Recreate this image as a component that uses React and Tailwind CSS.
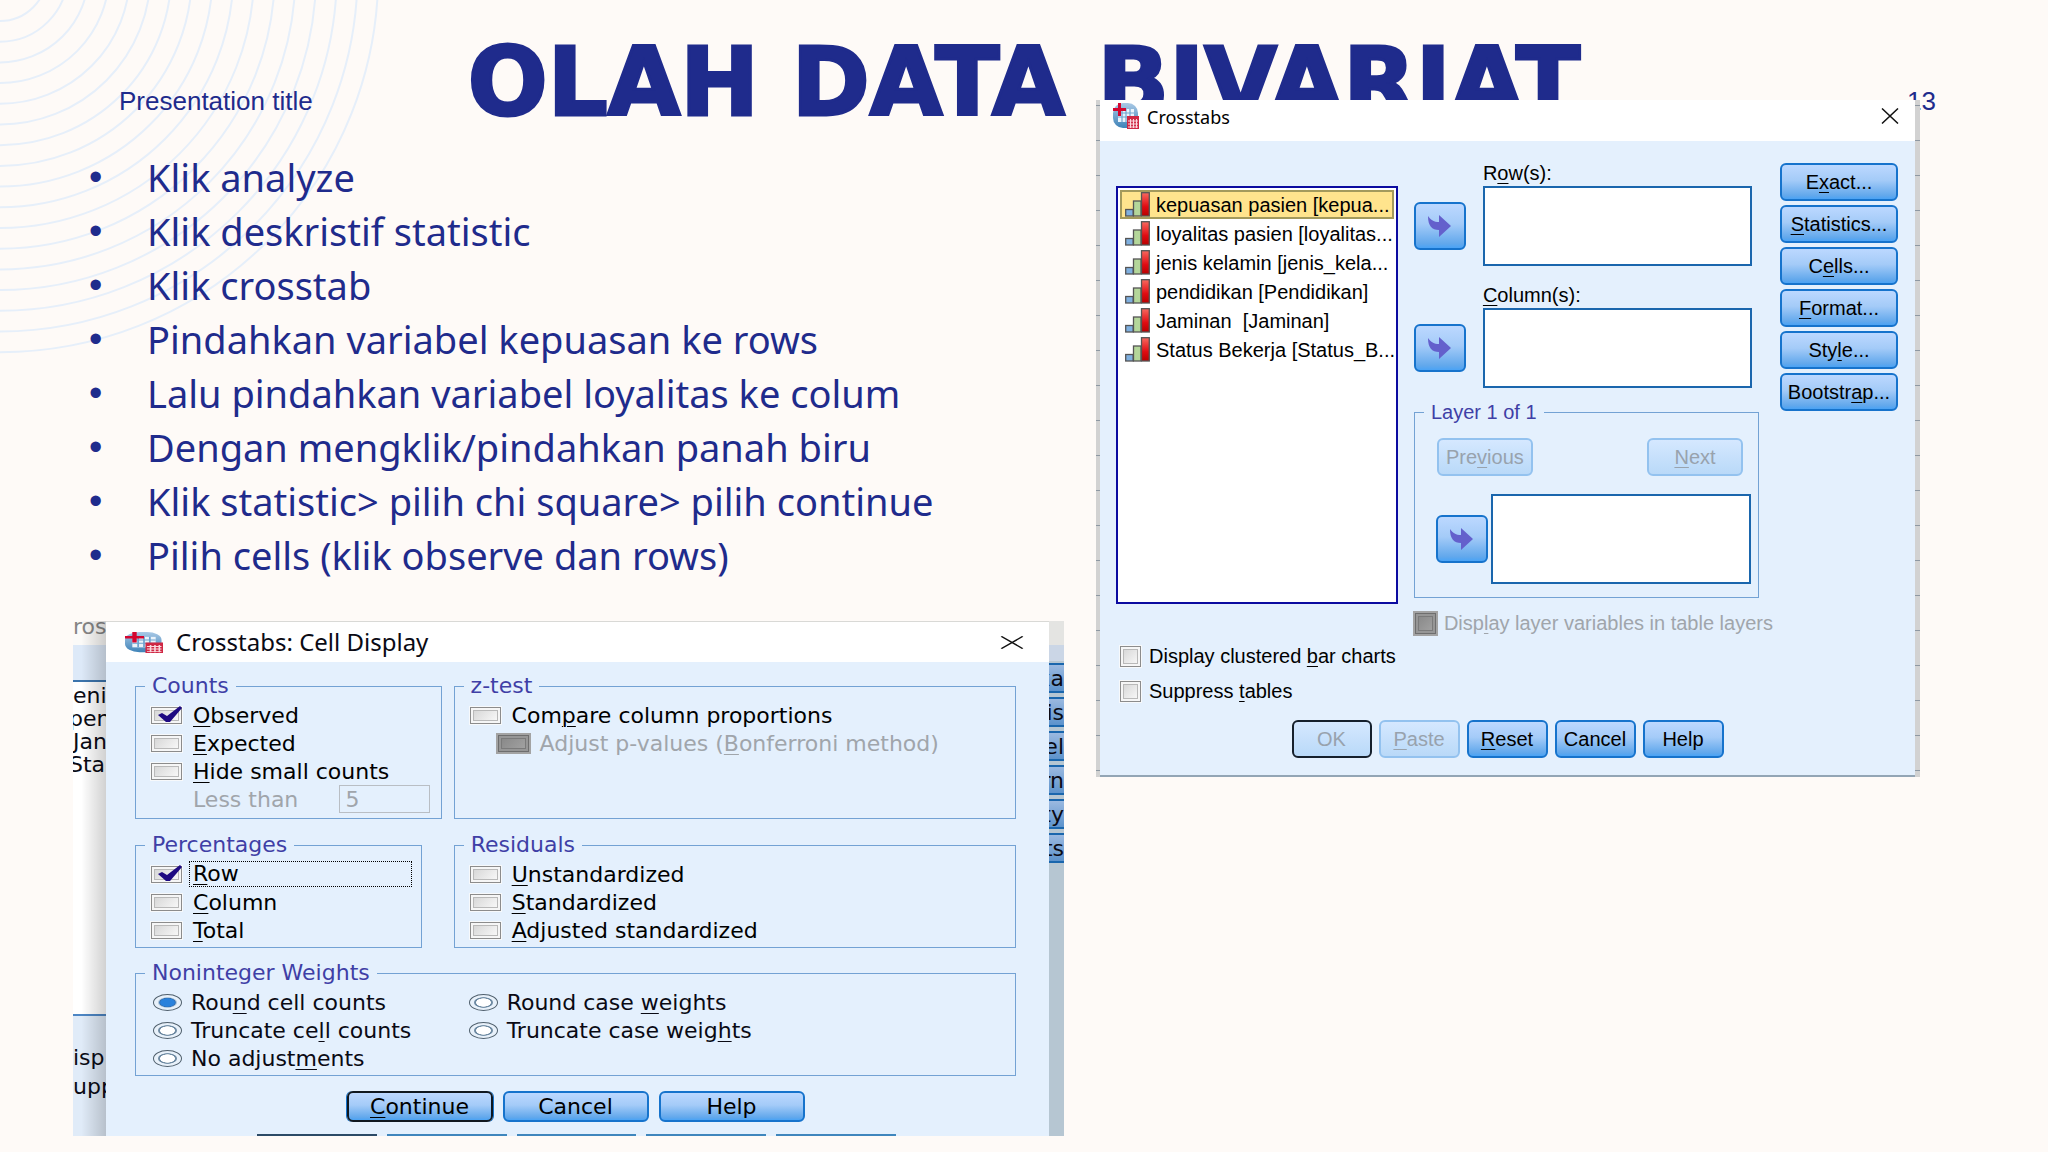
const steps = [
  'Klik analyze',
  'Klik deskristif statistic',
  'Klik crosstab',
  'Pindahkan variabel kepuasan ke rows',
  'Lalu pindahkan variabel loyalitas ke colum',
  'Dengan mengklik/pindahkan panah biru',
  'Klik statistic> pilih chi square> pilih continue',
  'Pilih cells (klik observe dan rows)',
];

const variables = [
  'kepuasan pasien [kepua...',
  'loyalitas pasien [loyalitas...',
  'jenis kelamin [jenis_kela...',
  'pendidikan [Pendidikan]',
  'Jaminan  [Jaminan]',
  'Status Bekerja [Status_B...',
];

const sideButtons = ['E&xact...', '&Statistics...', 'C&ells...', '&Format...', 'Sty&le...', 'Bootstr&ap...'];

const rings = Array.from({ length: 17 }, (_, i) => 47 + i * 20.7);

// "&" marks the letter that is underlined, as in Windows menus
function Mnemonic({ text }) {
  const at = text.indexOf('&');
  if (at < 0) return text;
  return (
    <span>
      {text.slice(0, at)}
      <span className="underline decoration-1 underline-offset-3">{text[at + 1]}</span>
      {text.slice(at + 2)}
    </span>
  );
}

function AppIcon({ className }) {
  return (
    <svg viewBox="0 0 26 26" preserveAspectRatio="none" className={className} aria-hidden="true">
      <defs>
        <linearGradient id="globe" x1="0" y1="0" x2="0" y2="1">
          <stop offset="0" stopColor="#a9c9e6" />
          <stop offset="1" stopColor="#3f83b8" />
        </linearGradient>
      </defs>
      <rect x="0" y="0" width="25" height="25" rx="10" fill="url(#globe)" />
      <rect x="5" y="6" width="16" height="13" fill="#eaf3fb" />
      <path d="M5 10h16M5 14h16M9 6v13M13 6v13M17 6v13" stroke="#6ea3d0" strokeWidth="1.2" />
      <path d="M5 0h3v5h5v3H8v5H5V8H0V5h5z" fill="#d4062f" />
      <rect x="14" y="13" width="12" height="13" fill="#cf2744" />
      <path d="M15 18h10M15 21h10M15 24h10M17.5 16v9M20.5 16v9M23.5 16v9" stroke="#fbd9df" strokeWidth="1.1" />
    </svg>
  );
}

function ScaleIcon() {
  return (
    <svg viewBox="0 0 25 25" className="h-[25px] w-[25px] shrink-0" aria-hidden="true">
      <defs>
        <linearGradient id="redBar" x1="0" y1="0" x2="0" y2="1">
          <stop offset="0" stopColor="#f8695f" />
          <stop offset="0.6" stopColor="#e00b12" />
          <stop offset="1" stopColor="#b80000" />
        </linearGradient>
      </defs>
      <rect x="0.7" y="17.5" width="7.5" height="6.5" fill="#7fb0e0" stroke="#555" strokeWidth="1.3" />
      <rect x="8.5" y="9" width="7.5" height="15" fill="#b4d69a" stroke="#555" strokeWidth="1.3" />
      <rect x="16.5" y="0.7" width="7.8" height="23.3" fill="url(#redBar)" stroke="#555" strokeWidth="1.3" />
    </svg>
  );
}

function CloseButton({ wide }) {
  return (
    <button type="button" aria-label="Close" className="shrink-0">
      <svg viewBox="0 0 18 16" preserveAspectRatio="none" className={wide ? 'h-[13px] w-6' : 'h-4 w-[18px]'}>
        <path d="M1 0.5 17 15.5M17 0.5 1 15.5" stroke="#111" strokeWidth="1.5" fill="none" />
      </svg>
    </button>
  );
}

const buttonLook = {
  normal: 'border-[#1673cc] bg-[linear-gradient(#bcd8ff,#a4cbf8_45%,#62a8ec_90%,#4aa3f5)] text-black',
  disabled: 'border-[#93c2ef] bg-[linear-gradient(#d5e8ff,#b9d9f8)] text-[#98a2ad]',
  ok: 'border-[#16202c] bg-[linear-gradient(#d5e8ff,#b9d9f8)] text-[#98a2ad]',
  focused: 'border-[#101820] bg-[linear-gradient(#bcd8ff,#a4cbf8_45%,#62a8ec_90%,#4aa3f5)] text-black shadow-[-1px_0_0_#1673cc,1px_0_0_#1673cc]',
};

function Button({ text, look = 'normal', className }) {
  return (
    <button
      type="button"
      disabled={look === 'disabled' || look === 'ok'}
      className={`rounded-md border-2 whitespace-nowrap ${buttonLook[look]} ${className}`}
    >
      <Mnemonic text={text} />
    </button>
  );
}

function ArrowButton({ label, className = '' }) {
  return (
    <button
      type="button"
      aria-label={label}
      className={`grid h-12 w-[52px] shrink-0 place-items-center rounded-md border-2 ${buttonLook.normal} ${className}`}
    >
      <svg viewBox="0 0 23 22" className="h-[22px] w-[23px]">
        <path d="M0 1C3 5 6 7 11 7V0L23 11 11 22V15C4 15 0 11 0 1z" fill="#6460cc" />
      </svg>
    </button>
  );
}

const boxLight =
  'border-[#8c8c8c] bg-[linear-gradient(135deg,#d2d2d2,#fdfdfd)] shadow-[inset_0_0_0_2px_#f6f6f6,inset_0_0_0_3px_#b9b9b9,0_0_0_1px_#f7f9fb]';
const boxDark =
  'border-[#6e6e6e] bg-[linear-gradient(135deg,#858585,#a5a5a5)] shadow-[inset_0_0_0_2px_#969696,inset_0_0_0_3px_#7a7a7a,0_0_0_2px_#a3a3a3]';

function Check({ text, checked, disabled, wide, focus, className = '' }) {
  return (
    <label className={`flex items-center whitespace-nowrap ${disabled ? 'text-[#a0a5ab]' : 'text-black'} ${className}`}>
      <span className="relative flex shrink-0">
        <input
          type="checkbox"
          defaultChecked={checked}
          disabled={disabled}
          className={`peer appearance-none border ${wide ? 'h-[17px] w-[31px]' : 'h-[21px] w-[21px]'} ${disabled ? boxDark : boxLight}`}
        />
        <svg viewBox="0 0 24 16" preserveAspectRatio="none" className="absolute -top-px left-[7px] hidden h-4 w-6 peer-checked:block">
          <path d="M0 9 4 7 9 10 22 0 24 2 12 16H8z" fill="#1e0a82" />
        </svg>
      </span>
      <span
        className={`px-1 ${wide ? 'ml-[7px]' : 'ml-1'} ${focus ? 'mr-[9px] flex-1 border border-dotted border-black pl-[3px] leading-6' : ''}`}
      >
        <Mnemonic text={text} />
      </span>
    </label>
  );
}

function Radio({ text, checked }) {
  return (
    <label className="flex h-7 items-center gap-[9px] whitespace-nowrap">
      <input
        type="radio"
        name="weights"
        defaultChecked={checked}
        className="h-[17px] w-[29px] shrink-0 appearance-none rounded-[50%] border border-[#4f5f6c] bg-[radial-gradient(closest-side,#fff_52%,#6f8ba3_58%,#6f8ba3_66%,#e8f1fa_74%)] checked:bg-[radial-gradient(closest-side,#2a82dc_50%,#2f6fb5_58%,#9db9d2_64%,#e8f1fa_74%)]"
      />
      <Mnemonic text={text} />
    </label>
  );
}

function Group({ title, className = '', body = '', children }) {
  return (
    <fieldset className={`min-w-0 border border-[#73a2d4] ${className}`}>
      <legend className="ml-[9px] px-[7px] leading-6 text-[#3f3fa6]">{title}</legend>
      <div className={body}>{children}</div>
    </fieldset>
  );
}

function Target({ id, text, className = '' }) {
  return (
    <div className={`flex gap-[17px] pr-[7px] ${className}`}>
      <ArrowButton label={`Move to ${id}`} className="mt-10" />
      <div className="flex min-w-0 flex-1 flex-col">
        <label htmlFor={id} className="pb-[2px] leading-[22px]">
          <Mnemonic text={text} />
        </label>
        <textarea id={id} readOnly className="h-20 resize-none border-2 border-[#1a66ad] bg-white" />
      </div>
    </div>
  );
}

function CrosstabsDialog() {
  return (
    <section className="min-w-0 bg-[repeating-linear-gradient(#d2d2d2_0px,#d2d2d2_5px,#8e98a2_5px,#8e98a2_6px,#d2d2d2_6px,#d2d2d2_35px)] pr-[5px] pl-1 font-['Liberation_Sans',Arial,sans-serif] text-[20px] text-black">
      <div className="border-b-2 border-[#93a5b5] bg-[#e4f0fd]">
        <header className="flex h-[41px] items-start bg-white pt-[3px] pr-[16px] pl-[13px]">
          <AppIcon className="h-[26px] w-[26px]" />
          <h2 className="ml-2 flex-1 font-['Noto_Sans',sans-serif] text-[18px] leading-[28px]">Crosstabs</h2>
          <span className="flex pt-[5px]">
            <CloseButton />
          </span>
        </header>

        <div className="flex pr-[17px] pl-4">
          <div className="min-w-0 flex-[281] pt-[45px]">
            <ul role="listbox" aria-label="Variables" className="h-[418px] border-2 border-[#0b0ba0] bg-white p-[2px]">
              {variables.map((name, i) => (
                <li
                  key={name}
                  role="option"
                  aria-selected={i === 0}
                  className={`flex h-[29px] items-center gap-[6px] border-2 pl-[3px] leading-6 whitespace-pre ${i === 0 ? 'border-[#a39a5c] bg-[#ffe48d]' : 'border-transparent'}`}
                >
                  <ScaleIcon />
                  {name}
                </li>
              ))}
            </ul>
            <Check text="Display clustered &bar charts" className="mt-[37px] ml-1 h-[30px]" />
            <Check text="Suppress &tables" className="mt-[5px] ml-1 h-[30px]" />
          </div>

          <div className="ml-4 min-w-0 flex-[344] pt-[21px]">
            <Target id="rows" text="R&ow(s):" />
            <Target id="columns" text="&Column(s):" className="mt-[18px]" />
            <Group title="Layer 1 of 1" className="mt-[12px] pb-[13px]">
              <div className="flex justify-between pt-[14px] pr-[15px] pl-[22px]">
                <Button text="Pre&vious" look="disabled" className="h-[38px] w-24" />
                <Button text="&Next" look="disabled" className="h-[38px] w-24" />
              </div>
              <div className="mt-[18px] flex items-center gap-[3px] pr-[7px] pl-[21px]">
                <ArrowButton label="Move to layer" />
                <textarea aria-label="Layer variables" readOnly className="h-[90px] min-w-0 flex-1 resize-none border-2 border-[#1a66ad] bg-white" />
              </div>
            </Group>
            <Check text="Disp&lay layer variables in table layers" disabled className="mt-[13px] ml-px h-6" />
          </div>

          <div className="ml-[21px] flex w-[118px] shrink-0 flex-col gap-1 pt-[22px]">
            {sideButtons.map((text) => (
              <Button key={text} text={text} className="h-[38px]" />
            ))}
          </div>
        </div>

        <div className="flex justify-center gap-[7px] pt-[14px] pb-[17px]">
          <Button text="OK" look="ok" className="h-[38px] w-20" />
          <Button text="&Paste" look="disabled" className="h-[38px] w-[81px]" />
          <Button text="&Reset" className="h-[38px] w-[81px]" />
          <Button text="Cancel" className="h-[38px] w-[81px]" />
          <Button text="Help" className="h-[38px] w-[81px]" />
        </div>
      </div>
    </section>
  );
}

// Slices of the parent window that stay visible beside the dialog
function LeftSliver() {
  return (
    <div aria-hidden="true" className="relative flex w-[33px] shrink-0 flex-col overflow-hidden bg-white">
      <div className="h-6 bg-[#fbfaf8] leading-[12px] text-[#858585]">ros</div>
      <div className="h-[37px] border-b-2 border-[#3c74ac] bg-[#dde9f8]" />
      <div className="flex flex-1 flex-col pt-[2px] leading-[23px]">
        <span>eni</span>
        <span className="-ml-1">pen</span>
        <span>Jan</span>
        <span className="-ml-1">Sta</span>
      </div>
      <div className="h-[122px] border-t-2 border-[#4d86c4] bg-[#e0ebf8] pt-[27px] leading-[29px]">
        <div>isp</div>
        <div>upp</div>
      </div>
      <div className="absolute inset-0 bg-[linear-gradient(90deg,transparent_25%,#0000002e)]" />
    </div>
  );
}

function RightSliver() {
  return (
    <div aria-hidden="true" className="flex w-[15px] shrink-0 flex-col overflow-hidden bg-[#b6c6d2]">
      <div className="h-6 bg-[#e4e4e2]" />
      <div className="mb-[2px] h-4 bg-[#cbd6e6]" />
      {['xa', 'is', 'el', 'rn', 'ty', 'ts'].map((text) => (
        <div key={text} className="mb-1 flex h-[30px] items-center justify-end border-y-2 border-[#1a66ad] bg-[linear-gradient(#9bb9e0,#5d93cc)]">
          {text}
        </div>
      ))}
    </div>
  );
}

function CellDisplayDialog() {
  return (
    <section className="flex font-['DejaVu_Sans',Verdana,sans-serif] text-[22px] text-[#0a0a14]">
      <LeftSliver />
      <div className="min-w-0 flex-1 border-t border-[#d9d9d6] bg-[#e4f0fd]">
        <header className="flex h-10 items-center bg-white pr-[25px] pl-[19px]">
          <AppIcon className="h-[21px] w-[38px]" />
          <h2 className="ml-[13px] flex-1 font-['Noto_Sans',sans-serif] text-[24px] leading-8">Crosstabs: Cell Display</h2>
          <CloseButton wide />
        </header>

        <div className="pt-3 pr-[33px] pl-[29px]">
          <div className="flex gap-3">
            <Group title="Counts" className="flex-[306]" body="pt-[3px] pb-[5px] pl-[15px]">
              <Check text="&Observed" checked wide className="h-7" />
              <Check text="&Expected" wide className="h-7" />
              <Check text="&Hide small counts" wide className="h-7" />
              <label className="flex h-7 items-center justify-between pr-[11px] pl-[42px] text-[#a0a5ab]">
                Less than
                <input disabled defaultValue="5" className="h-7 w-[91px] border border-[#b9bec4] bg-[#e4f0fd] px-[6px]" />
              </label>
            </Group>
            <Group title="z-test" className="flex-[563]" body="pt-[3px] pl-[15px]">
              <Check text="Com&pare column proportions" wide className="h-7" />
              <Check text="Adjust p-values (&Bonferroni method)" disabled wide className="ml-7 h-7" />
            </Group>
          </div>

          <div className="mt-[14px] flex">
            <Group title="Percentages" className="flex-[286]" body="pt-[3px] pb-[3px] pl-[15px]">
              <Check text="&Row" checked wide focus className="h-7" />
              <Check text="&Column" wide className="h-7" />
              <Check text="&Total" wide className="h-7" />
            </Group>
            <Group title="Residuals" className="ml-8 flex-[563]" body="pt-[3px] pb-[3px] pl-[15px]">
              <Check text="&Unstandardized" wide className="h-7" />
              <Check text="&Standardized" wide className="h-7" />
              <Check text="&Adjusted standardized" wide className="h-7" />
            </Group>
          </div>

          <Group title="Noninteger Weights" className="mt-[13px]" body="grid grid-cols-[316fr_547fr] pt-[3px] pb-[3px] pl-[17px]">
            <Radio text="Rou&nd cell counts" checked />
            <Radio text="Round case &weights" />
            <Radio text="Truncate ce&ll counts" />
            <Radio text="Truncate case weig&hts" />
            <Radio text="No adjust&ments" />
          </Group>

          <div className="mt-[15px] flex justify-center gap-[10px]">
            <Button text="&Continue" look="focused" className="h-[31px] w-[146px] leading-[26px]" />
            <Button text="Cancel" className="h-[31px] w-[146px] leading-[26px]" />
            <Button text="Help" className="h-[31px] w-[146px] leading-[26px]" />
          </div>
        </div>

        <div aria-hidden="true" className="mt-3 flex gap-[10px] pr-[153px] pl-[151px]">
          <span className="h-[2px] flex-1 bg-[#2c4a66]" />
          <span className="h-[2px] flex-1 bg-[#3f86bd]" />
          <span className="h-[2px] flex-1 bg-[#3f86bd]" />
          <span className="h-[2px] flex-1 bg-[#3f86bd]" />
          <span className="h-[2px] flex-1 bg-[#3f86bd]" />
        </div>
      </div>
      <RightSliver />
    </section>
  );
}

export default function App() {
  return (
    <div className="relative min-h-screen overflow-hidden bg-[#fefaf7] text-[#1f2b8c]">
      <svg className="absolute top-0 left-0 h-[360px] w-[390px]" viewBox="0 0 390 360" aria-hidden="true">
        {rings.map((r) => (
          <circle key={r} cx="0" cy="-26" r={r} fill="none" stroke="#e6effa" strokeWidth="2" />
        ))}
      </svg>

      <header className="relative grid grid-cols-[1fr_auto_1fr] pt-[35px] font-['Liberation_Sans',Arial,sans-serif] text-[26px] leading-[30px]">
        <p className="pt-[51px] pl-[119px]">Presentation title</p>
        <h1 className="font-['DejaVu_Sans',Verdana,sans-serif] text-[94px] leading-[96px] font-black whitespace-nowrap [-webkit-text-stroke:3px_#1f2b8c]">
          OLAH DATA BIVARIAT
        </h1>
        <p className="pt-[51px] pr-[112px] text-right">13</p>
      </header>

      <main className="relative -mt-[31px] grid grid-cols-[991fr_824fr] items-start gap-8 pr-32 pl-[73px]">
        <div className="min-w-0 pt-[50px]">
          <ul className="pl-4 font-['Noto_Sans',sans-serif] text-[38px] leading-[54px]">
            {steps.map((step) => (
              <li key={step} className="flex">
                <span className="w-[58px] shrink-0 font-['Liberation_Sans',Arial,sans-serif]">•</span>
                {step}
              </li>
            ))}
          </ul>
          <div className="mt-[39px]">
            <CellDisplayDialog />
          </div>
        </div>
        <CrosstabsDialog />
      </main>
    </div>
  );
}
